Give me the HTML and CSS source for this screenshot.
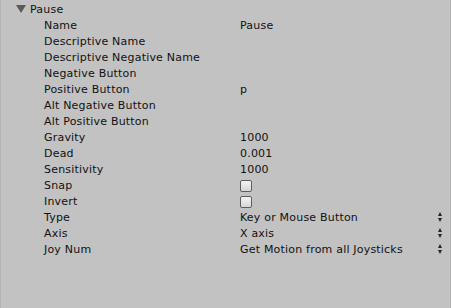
FILE: index.html
```html
<!DOCTYPE html>
<html lang="en">
<head>
    <meta charset="UTF-8">
    <title>Input Axis - Pause</title>
    <link rel="stylesheet" href="styles.css">
</head>
<body>
    <div class="inspector">
        <div class="foldout">
            <span class="arrow"></span>
            <span>Pause</span>
        </div>

        <div class="prop"><span class="label">Name</span><span class="value">Pause</span></div>
        <div class="prop"><span class="label">Descriptive Name</span><span class="value"></span></div>
        <div class="prop"><span class="label">Descriptive Negative Name</span><span class="value"></span></div>
        <div class="prop"><span class="label">Negative Button</span><span class="value"></span></div>
        <div class="prop"><span class="label">Positive Button</span><span class="value">p</span></div>
        <div class="prop"><span class="label">Alt Negative Button</span><span class="value"></span></div>
        <div class="prop"><span class="label">Alt Positive Button</span><span class="value"></span></div>
        <div class="prop"><span class="label">Gravity</span><span class="value">1000</span></div>
        <div class="prop"><span class="label">Dead</span><span class="value">0.001</span></div>
        <div class="prop"><span class="label">Sensitivity</span><span class="value">1000</span></div>
        <div class="prop"><span class="label">Snap</span><span class="value"><span class="checkbox"></span></span></div>
        <div class="prop"><span class="label">Invert</span><span class="value"><span class="checkbox"></span></span></div>
        <div class="prop"><span class="label">Type</span><span class="value popup">Key or Mouse Button<span class="spinner"></span></span></div>
        <div class="prop"><span class="label">Axis</span><span class="value popup">X axis<span class="spinner"></span></span></div>
        <div class="prop"><span class="label">Joy Num</span><span class="value popup">Get Motion from all Joysticks<span class="spinner"></span></span></div>
    </div>
</body>
</html>
```

FILE: styles.css
```css
* {
    box-sizing: border-box;
    margin: 0;
    padding: 0;
}

html, body {
    height: 100%;
}

body {
    background: #c2c2c2;
    font-family: "DejaVu Sans", Verdana, sans-serif;
    font-size: 11px;
    letter-spacing: 0.2px;
    color: #111;
}

.inspector {
    height: 308px;
    padding-top: 1px;
    border-left: 1px solid #b4b4b4;
    border-right: 1px solid #b0b0b0;
}

.foldout {
    display: flex;
    align-items: center;
    height: 16px;
    padding-left: 15px;
}

.arrow {
    width: 0;
    height: 0;
    margin-right: 4px;
    border-left: 5px solid transparent;
    border-right: 5px solid transparent;
    border-top: 8px solid #5a5a5a;
}

.prop {
    display: flex;
    align-items: center;
    height: 16px;
    padding-left: 43px;
    padding-right: 7px;
}

.label {
    width: 196px;
    flex-shrink: 0;
}

.value {
    flex: 1;
    display: flex;
    align-items: center;
}

.popup {
    justify-content: space-between;
}

.checkbox {
    width: 12px;
    height: 12px;
    border: 1px solid #5e5e5e;
    border-radius: 2px;
    background: linear-gradient(#f4f4f4, #d6d6d6);
    margin-top: 1px;
}

.spinner {
    position: relative;
    width: 5px;
    height: 10px;
}

.spinner:before,
.spinner:after {
    content: '';
    position: absolute;
    left: 0;
    border-left: 2.5px solid transparent;
    border-right: 2.5px solid transparent;
}

.spinner:before {
    top: 0;
    border-bottom: 4px solid #222;
}

.spinner:after {
    bottom: 0;
    border-top: 4px solid #222;
}
```
